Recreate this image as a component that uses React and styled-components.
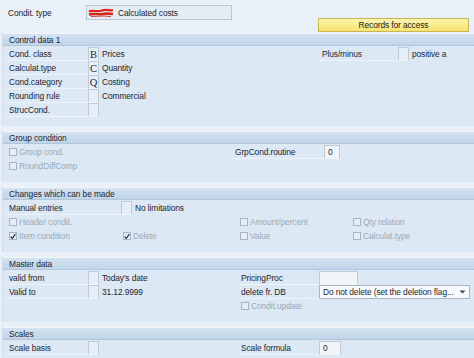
import styled, { createGlobalStyle } from "styled-components"

const GlobalStyle = createGlobalStyle`
  html, body { margin:0; padding:0; }
  body {
    background:#eaf0f7;
    font-family:"Liberation Sans", Arial, sans-serif;
    font-size:8.4px;
    letter-spacing:-0.1px;
    color:#1c2630;
    width:474px;
    height:358px;
    overflow:hidden;
  }
`

const Page = styled.div`
  display:flex;
  flex-direction:column;
  width:474px;
`
const TopArea = styled.div`
  display:flex;
  align-items:flex-start;
  height:33px;
  padding-left:8px;
  box-sizing:border-box;
`
const TopRow = styled.div`
  display:flex;
  align-items:center;
  margin-top:5px;
  height:15px;
`
const TopLabel = styled.span`
  width:78px;
`
const TypeField = styled.div`
  display:flex;
  align-items:center;
  width:146px;
  height:15px;
  box-sizing:border-box;
  border:1px solid #bcc7d2;
  background:#e4ecf5;
  padding-left:1px;
  span{ margin-left:4px; }
`
const AccessButton = styled.div`
  margin-left:auto;
  margin-right:5px;
  margin-top:18px;
  width:151px;
  height:14px;
  box-sizing:border-box;
  border:1px solid #c8b653;
  background:linear-gradient(#fdf5ad, #f7e36f);
  display:flex;
  align-items:center;
  justify-content:center;
  color:#222;
`
const Section = styled.div`
  margin:0 0 5px 2px;
  border-left:1px solid #d0dce8;
  background:#dce8f4;
`
const Header = styled.div`
  height:13px;
  line-height:13px;
  padding-left:6px;
  box-sizing:border-box;
  background:linear-gradient(#d5e3f1, #c1d4e8);
  border-top:1px solid #f3f7fb;
  border-bottom:1px solid #b1c6db;
`
const Body = styled.div`
  padding:1px 0 9px 3px;
`
const Row = styled.div`
  display:flex;
  align-items:center;
  height:14px;
`
const Cell = styled.div`
  flex:none;
  width:${p => p.w}px;
  margin-left:${p => p.ml || 0}px;
  display:flex;
  align-items:center;
  height:100%;
  white-space:nowrap;
  overflow:hidden;
`
const Label = styled(Cell)`
  height:14px;
  padding-left:3px;
  box-sizing:border-box;
  border-bottom:1px solid #eef3f9;
`
const Box = styled.div`
  flex:none;
  width:${p => p.w || 11}px;
  height:14px;
  box-sizing:border-box;
  border:1px solid #bfcad5;
  border-bottom-color:#f0f5fa;
  background:${p => p.light ? "#f1f5fa" : "#e6eef7"};
  display:flex;
  align-items:center;
  justify-content:${p => p.left ? "flex-start" : "center"};
  padding-left:${p => p.left ? 3 : 0}px;
  font-family:${p => p.serif ? '"Liberation Serif", "Times New Roman", serif' : "inherit"};
  font-size:${p => p.serif ? 10.5 : 8.4}px;
`
const CheckCell = styled(Cell)`
  padding-left:3px;
  box-sizing:border-box;
  color:${p => p.off ? "#9da9b5" : "#1c2630"};
`
const Tick = styled.span`
  flex:none;
  width:8px;
  height:8px;
  box-sizing:border-box;
  border:1px solid #a8b4c0;
  background:#e7eef6;
  margin-right:2px;
  display:flex;
  align-items:center;
  justify-content:center;
`
const Select = styled.div`
  flex:none;
  width:151px;
  height:14px;
  box-sizing:border-box;
  border:1px solid #a7b6c5;
  background:#f7fafd;
  display:flex;
  align-items:center;
  padding-left:3px;
  padding-right:2px;
  span{ flex:1; white-space:nowrap; overflow:hidden; }
`

function Check({ w, ml, off, checked, children }) {
  return (
    <CheckCell w={w} ml={ml} off={off}>
      <Tick>
        {checked && (
          <svg width="7" height="7" viewBox="0 0 7 7">
            <path d="M0.8 3.6 L2.7 5.6 L6.3 0.8" fill="none" stroke="#1c2530" strokeWidth="1.3" />
          </svg>
        )}
      </Tick>
      {children}
    </CheckCell>
  )
}

function Scribble() {
  return (
    <svg width="26" height="10" viewBox="0 0 26 10">
      <path d="M1 3.5 C5 1.5 9 4.5 14 2.5 S22 3.5 25 2" fill="none" stroke="#e2241b" strokeWidth="2.2" />
      <path d="M1 6.5 C7 5 12 7.5 18 5.5 L25 6" fill="none" stroke="#d9261d" strokeWidth="2.4" />
      <path d="M3 8.5 L16 8 L23 8.6" fill="none" stroke="#c9453a" strokeWidth="1" />
    </svg>
  )
}

export default function App() {
  return (
    <Page>
      <GlobalStyle />
      <TopArea>
        <TopRow>
          <TopLabel>Condit. type</TopLabel>
          <TypeField>
            <Scribble />
            <span>Calculated costs</span>
          </TypeField>
        </TopRow>
        <AccessButton>Records for access</AccessButton>
      </TopArea>

      <Section>
        <Header>Control data 1</Header>
        <Body>
          <Row>
            <Label w={82}>Cond. class</Label>
            <Box serif>B</Box>
            <Cell w={217} ml={3}>Prices</Cell>
            <Label w={79}>Plus/minus</Label>
            <Box />
            <Cell w={60} ml={3}>positive a</Cell>
          </Row>
          <Row>
            <Label w={82}>Calculat.type</Label>
            <Box serif>C</Box>
            <Cell w={217} ml={3}>Quantity</Cell>
          </Row>
          <Row>
            <Label w={82}>Cond.category</Label>
            <Box serif>Q</Box>
            <Cell w={217} ml={3}>Costing</Cell>
          </Row>
          <Row>
            <Label w={82}>Rounding rule</Label>
            <Box />
            <Cell w={217} ml={3}>Commercial</Cell>
          </Row>
          <Row>
            <Label w={82}>StrucCond.</Label>
            <Box />
          </Row>
        </Body>
      </Section>

      <Section>
        <Header>Group condition</Header>
        <Body>
          <Row>
            <Check w={226} off>Group cond.</Check>
            <Label w={92}>GrpCond.routine</Label>
            <Box w={16} left light>0</Box>
          </Row>
          <Row>
            <Check w={226} off>RoundDiffComp</Check>
          </Row>
        </Body>
      </Section>

      <Section>
        <Header>Changes which can be made</Header>
        <Body>
          <Row>
            <Label w={115}>Manual entries</Label>
            <Box />
            <Cell w={100} ml={3}>No limitations</Cell>
          </Row>
          <Row>
            <Check w={231} off>Header condit.</Check>
            <Check w={113} off>Amount/percent</Check>
            <Check w={100} off>Qty relation</Check>
          </Row>
          <Row>
            <Check w={114} off checked>Item condition</Check>
            <Check w={117} off checked>Delete</Check>
            <Check w={113} off>Value</Check>
            <Check w={100} off>Calculat.type</Check>
          </Row>
        </Body>
      </Section>

      <Section>
        <Header>Master data</Header>
        <Body>
          <Row>
            <Label w={82}>valid from</Label>
            <Box />
            <Cell w={136} ml={3}>Today's date</Cell>
            <Label w={81}>PricingProc</Label>
            <Box w={39} light />
          </Row>
          <Row>
            <Label w={82}>Valid to</Label>
            <Box />
            <Cell w={136} ml={3}>31.12.9999</Cell>
            <Label w={81}>delete fr. DB</Label>
            <Select>
              <span>Do not delete (set the deletion flag...</span>
              <svg width="9" height="6" viewBox="0 0 9 6">
                <path d="M1.5 1.5 L4.5 4.5 L7.5 1.5 Z" fill="#3a4654" />
              </svg>
            </Select>
          </Row>
          <Row>
            <Cell w={232} />
            <Check w={120} off>Condit.update</Check>
          </Row>
        </Body>
      </Section>

      <Section>
        <Header>Scales</Header>
        <Body>
          <Row>
            <Label w={82}>Scale basis</Label>
            <Box />
            <Cell w={136} ml={3} />
            <Label w={81}>Scale formula</Label>
            <Box w={22} left light>0</Box>
          </Row>
        </Body>
      </Section>
    </Page>
  )
}
